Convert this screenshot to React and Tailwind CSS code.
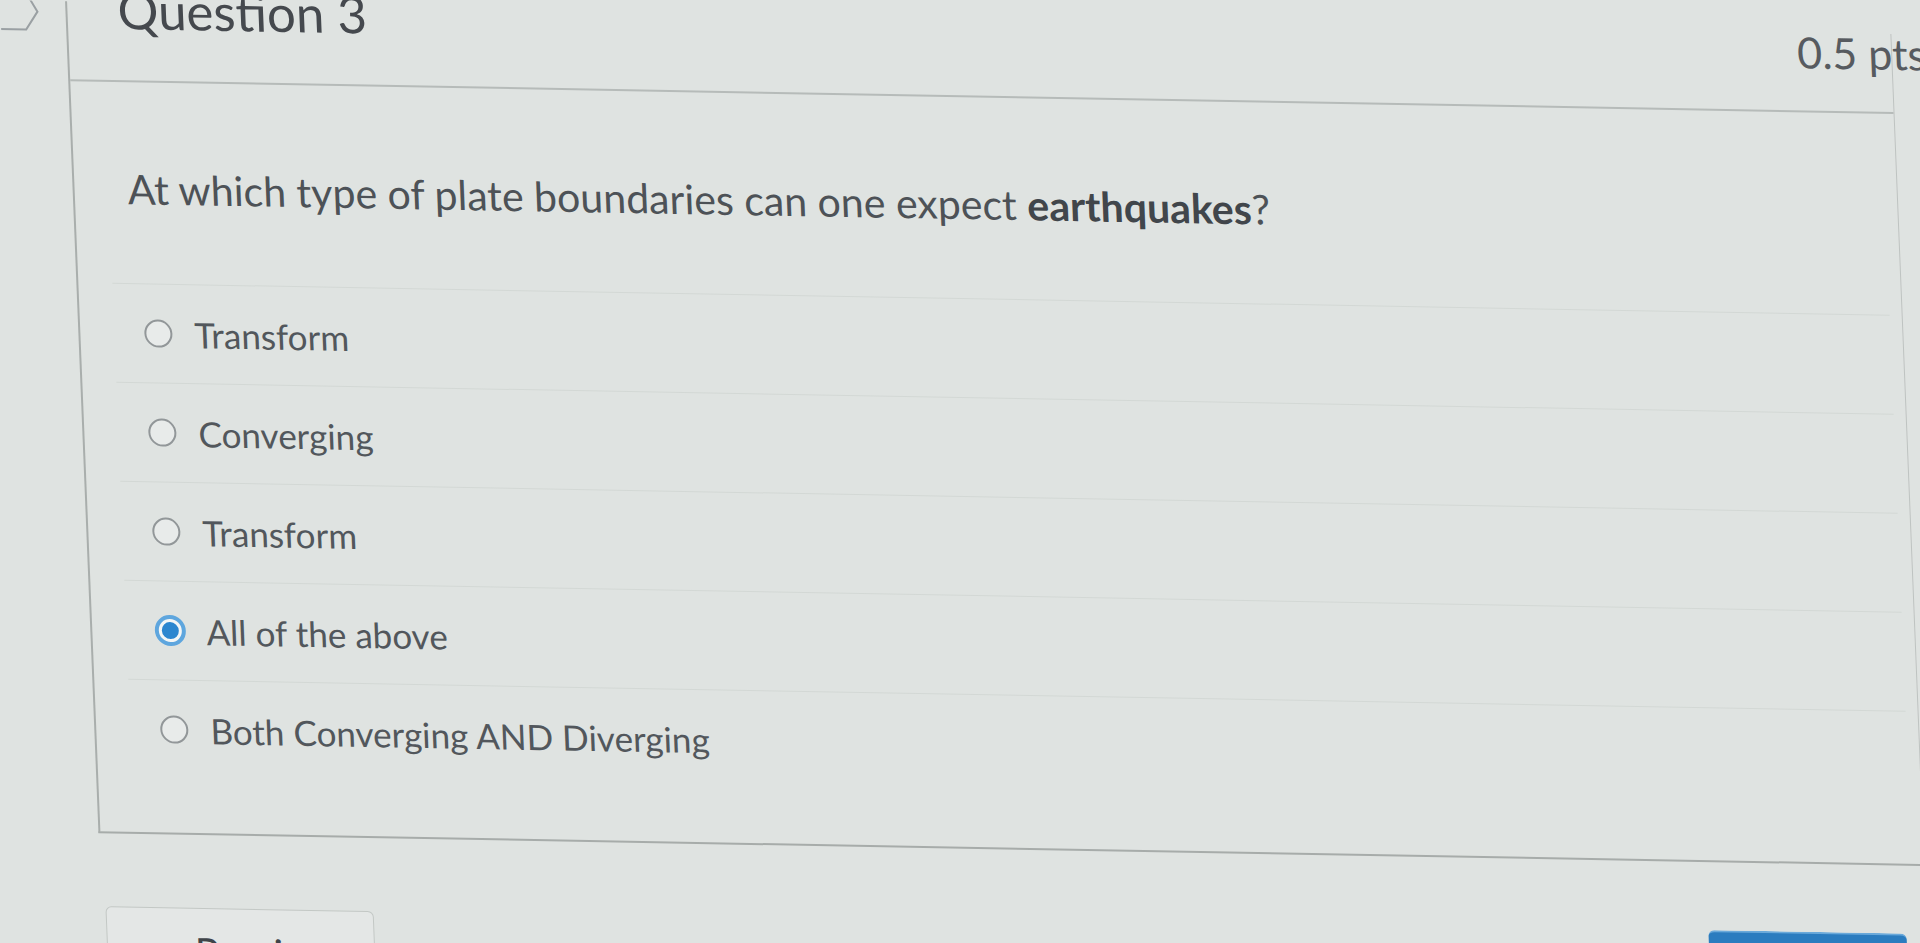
import React from "react";

function Radio({ checked }) {
  if (checked) {
    return (
      <svg width="32" height="32" viewBox="0 0 32 32" className="shrink-0">
        <circle cx="16" cy="16" r="13.5" fill="#f4f6f6" stroke="#5ea6de" strokeWidth="4" />
        <circle cx="16" cy="16" r="8.5" fill="#2c86cf" />
      </svg>
    );
  }
  return (
    <svg width="32" height="32" viewBox="0 0 32 32" className="shrink-0">
      <circle cx="16" cy="16" r="13" fill="#e8ebea" stroke="#929799" strokeWidth="2" />
    </svg>
  );
}

const answers = [
  { text: "Transform", checked: false },
  { text: "Converging", checked: false },
  { text: "Transform", checked: false },
  { text: "All of the above", checked: true },
  { text: "Both Converging AND Diverging", checked: false },
];

export default function App() {
  return (
    <div className="w-[1920px] h-[943px] overflow-hidden bg-[#dfe3e1] font-['Lato','Noto_Sans',sans-serif]">
      <div className="w-[1920px] h-[943px] origin-top-left skew-x-[2.3deg] skew-y-[1.03deg]">
        <div className="flex">
          <div className="w-[65px] shrink-0">
            <svg width="44" height="36" viewBox="0 0 44 36">
              <path d="M-2 29 L25 29 L37 11 L29 -3" fill="none" stroke="#9aa0a3" strokeWidth="2" />
            </svg>
          </div>
          <div className="w-[1825px] shrink-0 border-l-[2px] border-b-[2px] border-r border-l-[#a9aeac] border-b-[#a7acaa] border-r-[#bfc3c1]">
            <div className="h-[80px] flex border-b-2 border-[#b6bbb9]">
              <div className="w-[1728px] shrink-0 pl-[50px]">
                <div className="-mt-[18px] text-[51px] leading-none text-[#45494e]">Question 3</div>
              </div>
              <div className="-mt-[2px] text-[43px] leading-none text-[#575b60] whitespace-nowrap">0.5 pts</div>
            </div>
            <div className="pb-[54px]">
              <div className="mt-[86px] pl-[53px] text-[41px] leading-none text-[#4d5257] whitespace-nowrap">
                At which type of plate boundaries can one expect <span className="font-bold text-[#41464b]">earthquakes</span>?
              </div>
              <div className="mt-[74px] ml-[34px] mr-[12px] flex flex-col">
                {answers.map((a, i) => (
                  <div key={i} className="h-[99px] flex items-center pl-[28px] gap-[20px] border-t border-[#d3d8d5]">
                    <Radio checked={a.checked} />
                    <span className="text-[35px] leading-none text-[#52575c] whitespace-nowrap">{a.text}</span>
                  </div>
                ))}
              </div>
            </div>
          </div>
        </div>
        <div className="mt-[73px] flex">
          <div className="ml-[69px] w-[268px] h-[80px] shrink-0 rounded-[6px] border border-[#c3c8c5] bg-[#e4e7e6] pt-[23px] pl-[87px] text-[40px] leading-none text-[#3f4449]">
            Previous
          </div>
          <div className="ml-[1334px] -mt-[5px] w-[198px] h-[80px] shrink-0 rounded-[6px] border-t-2 border-[#6aa9da] bg-[#2b7cbf]"></div>
        </div>
      </div>
    </div>
  );
}
